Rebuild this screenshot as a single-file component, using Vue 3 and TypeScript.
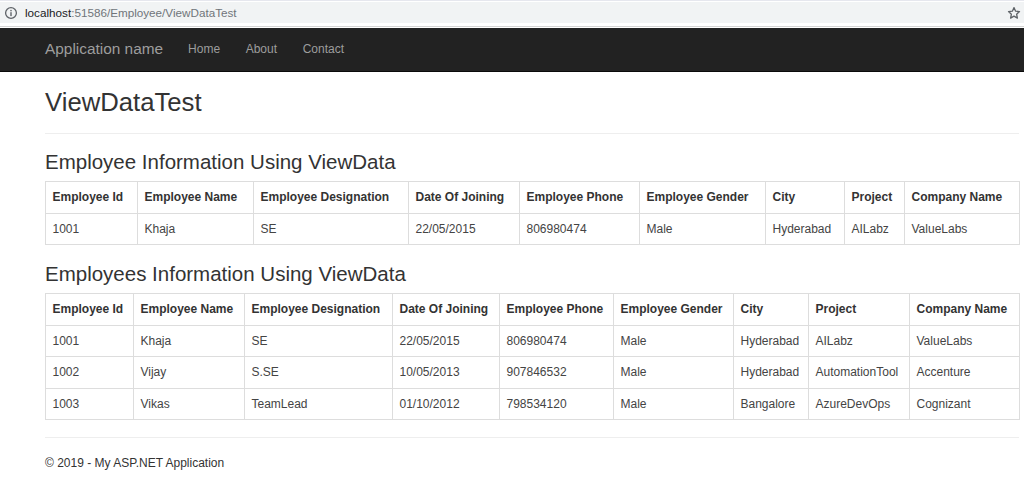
<script setup lang="ts">
interface Employee {
  id: number
  name: string
  designation: string
  joined: string
  phone: string
  gender: string
  city: string
  project: string
  company: string
}

const columns = [
  'Employee Id',
  'Employee Name',
  'Employee Designation',
  'Date Of Joining',
  'Employee Phone',
  'Employee Gender',
  'City',
  'Project',
  'Company Name',
]

const employees: Employee[] = [
  { id: 1001, name: 'Khaja', designation: 'SE', joined: '22/05/2015', phone: '806980474', gender: 'Male', city: 'Hyderabad', project: 'AILabz', company: 'ValueLabs' },
  { id: 1002, name: 'Vijay', designation: 'S.SE', joined: '10/05/2013', phone: '907846532', gender: 'Male', city: 'Hyderabad', project: 'AutomationTool', company: 'Accenture' },
  { id: 1003, name: 'Vikas', designation: 'TeamLead', joined: '01/10/2012', phone: '798534120', gender: 'Male', city: 'Bangalore', project: 'AzureDevOps', company: 'Cognizant' },
]

const tables = [
  {
    title: 'Employee Information Using ViewData',
    rows: employees.slice(0, 1),
    widths: [92, 116, 155, 111, 120, 126, 79, 60, 115],
  },
  {
    title: 'Employees Information Using ViewData',
    rows: employees,
    widths: [88, 111, 148, 107, 114, 120, 75, 101, 110],
  },
]
</script>

<template>
  <div class="page">
    <div class="browser-bar">
      <div class="address">
        <svg class="info" width="14" height="14" viewBox="0 0 14 14">
          <circle cx="7" cy="7" r="5.4" fill="none" stroke="#5f6368" stroke-width="1.3" />
          <rect x="6.3" y="6.2" width="1.4" height="3.9" fill="#5f6368" />
          <rect x="6.3" y="3.9" width="1.4" height="1.4" fill="#5f6368" />
        </svg>
        <span class="url"><span class="host">localhost</span>:51586/Employee/ViewDataTest</span>
        <svg class="star" width="14" height="14" viewBox="0 0 14 14">
          <path d="M7 1.6l1.6 3.6 3.9.4-2.9 2.6.8 3.9L7 10.1l-3.4 2 .8-3.9L1.5 5.6l3.9-.4z" fill="none" stroke="#5f6368" stroke-width="1.3" stroke-linejoin="round" />
        </svg>
      </div>
    </div>

    <nav class="navbar">
      <span class="brand">Application name</span>
      <a class="nav-link">Home</a>
      <a class="nav-link">About</a>
      <a class="nav-link">Contact</a>
    </nav>

    <main class="content">
      <h1>ViewDataTest</h1>
      <hr class="title-rule">

      <section v-for="table in tables" :key="table.title">
        <h2>{{ table.title }}</h2>
        <table>
          <colgroup>
            <col v-for="(w, i) in table.widths" :key="i" :style="{ width: w + 'px' }">
          </colgroup>
          <thead>
            <tr>
              <th v-for="col in columns" :key="col">{{ col }}</th>
            </tr>
          </thead>
          <tbody>
            <tr v-for="row in table.rows" :key="row.id">
              <td>{{ row.id }}</td>
              <td>{{ row.name }}</td>
              <td>{{ row.designation }}</td>
              <td>{{ row.joined }}</td>
              <td>{{ row.phone }}</td>
              <td>{{ row.gender }}</td>
              <td>{{ row.city }}</td>
              <td>{{ row.project }}</td>
              <td>{{ row.company }}</td>
            </tr>
          </tbody>
        </table>
      </section>

      <hr class="foot-rule">
      <footer>© 2019 - My ASP.NET Application</footer>
    </main>
  </div>
</template>

<style>
html,
body {
  margin: 0;
  background: #fff;
}
</style>

<style scoped>
.page {
  width: 1024px;
  height: 493px;
  overflow: hidden;
  font-family: "Liberation Sans", Arial, sans-serif;
  color: #333;
}

.browser-bar {
  height: 27px;
  box-sizing: border-box;
  padding-top: 2px;
  background: #fff;
  border-top: 1px solid #e6e7ee;
  border-bottom: 1px solid #d4d4d4;
}

.address {
  height: 21px;
  background: #f1f3f4;
  display: flex;
  align-items: center;
  padding: 0 3px 0 4px;
  margin-top: -1px;
}

.info {
  flex: none;
}

.url {
  margin-left: 7px;
  font-size: 11.7px;
  color: #70757a;
}

.host {
  color: #202124;
}

.star {
  margin-left: auto;
  flex: none;
}

.navbar {
  height: 44px;
  box-sizing: border-box;
  margin-top: 1px;
  padding: 0 0 2px 45px;
  background: #222;
  border-bottom: 1px solid #0a0a0a;
  display: flex;
  align-items: center;
}

.brand {
  font-size: 15.4px;
  color: #9d9d9d;
  margin-right: 25px;
}

.nav-link {
  font-size: 12px;
  color: #9d9d9d;
  margin-right: 25.6px;
}

.content {
  padding: 0 5px 0 45px;
}

h1 {
  margin: 0;
  padding-top: 15px;
  font-size: 25.7px;
  line-height: 30px;
  font-weight: 400;
  color: #333;
}

.title-rule {
  margin: 16px 0 0;
  border: 0;
  border-top: 1px solid #eee;
}

h2 {
  margin: 0;
  padding-top: 16px;
  padding-bottom: 7px;
  font-size: 20.5px;
  line-height: 24px;
  font-weight: 400;
}

section + section h2 {
  padding-top: 17px;
}

table {
  width: 974px;
  table-layout: fixed;
  border-collapse: collapse;
  font-size: 12px;
}

th,
td {
  height: 31.5px;
  box-sizing: border-box;
  padding: 0 6.5px;
  border: 1px solid #ddd;
  text-align: left;
  white-space: nowrap;
}

th {
  font-weight: 700;
  color: #333;
}

td {
  color: #444;
}

.foot-rule {
  margin: 17px 0 0;
  border: 0;
  border-top: 1px solid #eee;
}

footer {
  padding-top: 18px;
  font-size: 12px;
  line-height: 15px;
}
</style>
